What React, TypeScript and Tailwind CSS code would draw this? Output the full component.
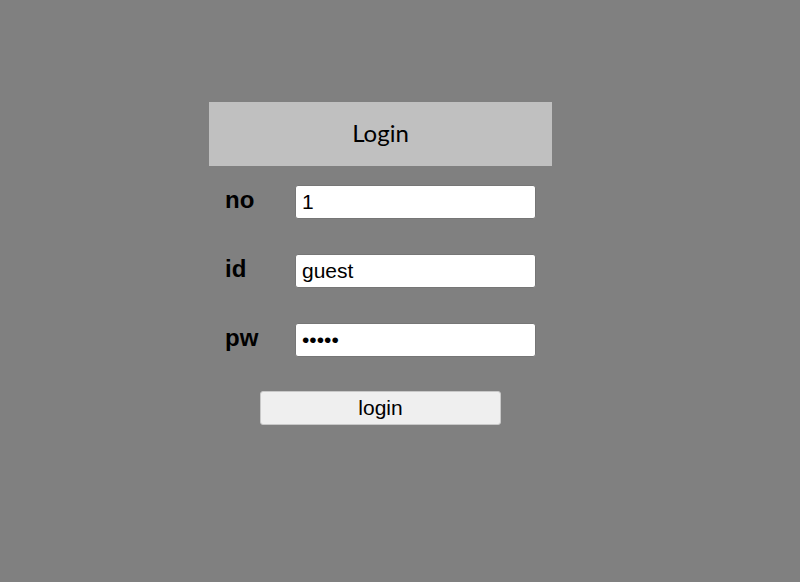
import { useState } from "react";

const fields = [
    { key: "no", label: "no", type: "text", value: "1" },
    { key: "id", label: "id", type: "text", value: "guest" },
    { key: "pw", label: "pw", type: "password", value: "guest" },
];

export default function App() {
    const [values, setValues] = useState<Record<string, string>>(Object.fromEntries(fields.map((f) => [f.key, f.value])));

    return (
        <div className="w-[800px] h-[582px] bg-[#808080] pt-[102px]" style={{ fontFamily: '"Liberation Sans", Arial, sans-serif' }}>
            <div className="w-[343px] ml-[209px] flex flex-col">
                <div className="h-[64px] pb-[3px] bg-[#c0c0c0] flex items-center justify-center text-[24px] text-black" style={{ fontFamily: "Lato, sans-serif" }}>
                    Login
                </div>

                <div className="flex flex-col gap-[36px] mt-[19px] pl-4">
                    {fields.map((f) => (
                        <div key={f.key} className="flex items-center h-[33px]">
                            <label htmlFor={f.key} className="w-[70px] pb-[4px] text-[24px] font-bold text-black">
                                {f.label}
                            </label>
                            <input
                                id={f.key}
                                type={f.type}
                                value={values[f.key]}
                                onChange={(e) => setValues((prev) => ({ ...prev, [f.key]: e.target.value }))}
                                className="w-[241px] h-[34px] px-[6px] bg-white border border-[#767676] rounded-[3px] text-[21px] text-black focus:outline-none"
                            />
                        </div>
                    ))}
                </div>

                <button type="button" className="w-[241px] h-[34px] ml-[51px] mt-[35px] bg-[#efefef] border border-[#c8c8c8] rounded-[3px] text-[21px] text-black">
                    login
                </button>
            </div>
        </div>
    );
}
